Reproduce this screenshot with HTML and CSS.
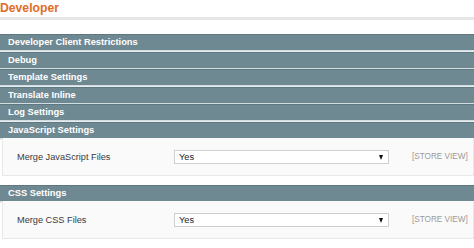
FILE: index.html
```html
<!DOCTYPE html>
<html lang="en">
<head>
    <meta charset="UTF-8">
    <title>Developer</title>
    <link rel="stylesheet" href="styles.css">
</head>
<body>
 <main class="page">
    <h3 class="page-title">Developer</h3>

    <div class="section-head">Developer Client Restrictions</div>
    <div class="section-head">Debug</div>
    <div class="section-head">Template Settings</div>
    <div class="section-head">Translate Inline</div>
    <div class="section-head">Log Settings</div>
    <div class="section-head">JavaScript Settings</div>
    <div class="section-body">
        <div class="field-row">
            <label class="field-label">Merge JavaScript Files</label>
            <div class="select">Yes<span class="arrow"></span></div>
            <span class="scope">[STORE VIEW]</span>
        </div>
    </div>

    <div class="section-head">CSS Settings</div>
    <div class="section-body">
        <div class="field-row">
            <label class="field-label">Merge CSS Files</label>
            <div class="select">Yes<span class="arrow"></span></div>
            <span class="scope">[STORE VIEW]</span>
        </div>
    </div>
 </main>
</body>
</html>
```

FILE: styles.css
```css
*{
    margin: 0;
    padding: 0;
    box-sizing: border-box;
}
body{
    background: #fff;
    font-family: "Liberation Sans", Arial, sans-serif;
}
.page{
    width: 474px;
}
.page-title{
    height: 20px;
    padding-left: 0;
    font-size: 12.2px;
    line-height: 17px;
    font-weight: bold;
    color: #e06d28;
    border-bottom: 3px solid #e6e6e6;
    margin-bottom: 14px;
}
.section-head{
    height: 16px;
    line-height: 15px;
    padding-left: 8px;
    margin-bottom: 1.5px;
    background-color: #6f8992;
    border-top: 1px solid #5f7780;
    box-shadow: 0 1.5px 0 #d2dde1;
    color: #fff;
    font-size: 9.3px;
    font-weight: bold;
}
.section-body{
    background-color: #fafafa;
    border: 1px solid #e8e8e8;
    border-top: 0;
    margin-left: 2px;
    margin-bottom: 9px;
    margin-top: -1.5px;
    padding: 12px 0 11px;
}
.field-row{
    display: flex;
    align-items: center;
    height: 14px;
}
.field-label{
    width: 171px;
    padding-left: 14px;
    font-size: 9.2px;
    color: #3a3a3a;
}
.select{
    position: relative;
    width: 215px;
    height: 14px;
    line-height: 12px;
    padding-left: 4px;
    background: #fff;
    border: 1px solid #cfcfcf;
    font-size: 9.2px;
    color: #222;
}
.arrow{
    position: absolute;
    right: 5px;
    top: 4px;
    border-left: 2.5px solid transparent;
    border-right: 2.5px solid transparent;
    border-top: 5px solid #111;
}
.scope{
    margin-left: 23px;
    font-size: 8.2px;
    color: #9a9a9a;
}
```
